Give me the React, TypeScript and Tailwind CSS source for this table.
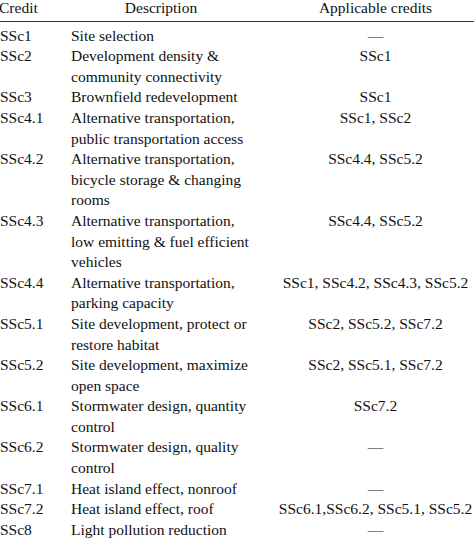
import React from "react";

const rows: [string, string, string][] = [
  ["SSc1", "Site selection", "—"],
  ["SSc2", "Development density & community connectivity", "SSc1"],
  ["SSc3", "Brownfield redevelopment", "SSc1"],
  ["SSc4.1", "Alternative transportation, public transportation access", "SSc1, SSc2"],
  ["SSc4.2", "Alternative transportation, bicycle storage & changing rooms", "SSc4.4, SSc5.2"],
  ["SSc4.3", "Alternative transportation, low emitting & fuel efficient vehicles", "SSc4.4, SSc5.2"],
  ["SSc4.4", "Alternative transportation, parking capacity", "SSc1, SSc4.2, SSc4.3, SSc5.2"],
  ["SSc5.1", "Site development, protect or restore habitat", "SSc2, SSc5.2, SSc7.2"],
  ["SSc5.2", "Site development, maximize open space", "SSc2, SSc5.1, SSc7.2"],
  ["SSc6.1", "Stormwater design, quantity control", "SSc7.2"],
  ["SSc6.2", "Stormwater design, quality control", "—"],
  ["SSc7.1", "Heat island effect, nonroof", "—"],
  ["SSc7.2", "Heat island effect, roof", "SSc6.1,SSc6.2, SSc5.1, SSc5.2"],
  ["SSc8", "Light pollution reduction", "—"],
];

export default function App() {
  return (
    <div
      className="w-[474px] h-[542px] overflow-hidden bg-white text-[#111111] text-[15.5px] leading-[20.6px]"
      style={{ fontFamily: '"Liberation Serif", "Times New Roman", serif' }}
    >
      <div className="-mt-[2px] pb-[2px] border-b-[1.5px] border-[#333333] grid grid-cols-[71px_180px_1fr]">
        <div className="-ml-[1px]">Credit</div>
        <div className="text-center">Description</div>
        <div className="pl-[26px] text-center whitespace-nowrap">Applicable credits</div>
      </div>
      <div className="pt-[4px] grid grid-cols-[71px_180px_1fr]">
        {rows.map(([c, d, a]) => (
          <React.Fragment key={c}>
            <div>{c}</div>
            <div>{d}</div>
            <div className="pl-[26px] flex justify-center whitespace-nowrap">
              <span>{a}</span>
            </div>
          </React.Fragment>
        ))}
      </div>
    </div>
  );
}
